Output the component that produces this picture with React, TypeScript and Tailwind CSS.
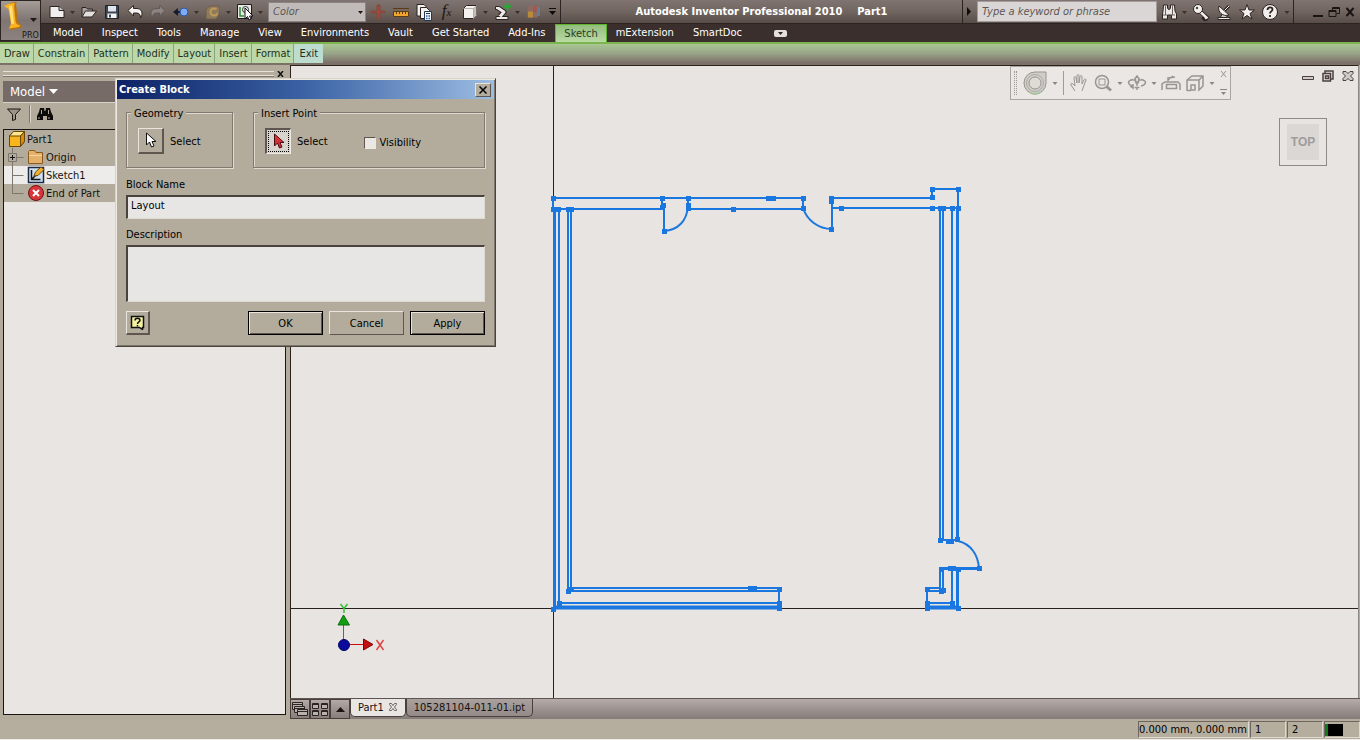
import type { ReactNode } from 'react';

const outline = { stroke: '#2b2422', strokeWidth: 1 };

function Caret({ className = 'w-[9px]', fill = '#3a302d' }: { className?: string; fill?: string }) {
  return (
    <svg className={`${className} h-[10px] shrink-0`} viewBox="0 0 9 10" aria-hidden="true">
      <path d="M2 4h5L4.500 7z" fill={fill} />
    </svg>
  );
}

function Tool({ label, children }: { label: string; children: ReactNode }) {
  return (
    <button aria-label={label} className="flex h-full w-[23px] shrink-0 items-center justify-center">
      <svg className="h-[18px] w-[18px]" viewBox="0 0 18 18" fill="none" aria-hidden="true">
        {children}
      </svg>
    </button>
  );
}

function AppButton() {
  return (
    <button
      aria-label="Inventor menu"
      className="relative h-[41px] w-[41px] shrink-0 border border-[#2b2422] bg-linear-to-b from-[#a59c98] via-[#7f7572] to-[#8c8380]"
    >
      <svg className="h-full w-full" viewBox="0 0 39 39" aria-hidden="true">
        <path d="M4 5c3-2.500 8-4 12-4l-1 2 2 16c0 3 2 5 4 5l-1 3-11 2 1-3c1-1 1-2 0.500-4L8 7z" fill="#b9720f" />
        <path d="M3 5c3-2 7-3 11-3l-1 3 1.500 15c.5 3 2 4 4.500 4l-1 2-10 1.500 1-2.500c1-1 1-3 .5-5L7.500 8z" fill="#f9b321" />
        <path d="M8 5l3-.500 2 18-2.500.5z" fill="#ffe07a" />
        <path d="M29 17h7l-3.500 4z" fill="#1e1816" />
      </svg>
      <span className="absolute right-px bottom-0 text-[9px] leading-[10px] text-[#1b1615]">PRO</span>
    </button>
  );
}

function QuickAccess() {
  return (
    <div className="flex h-full shrink-0 items-center border-r border-[#2b2422] pl-1">
      <Tool label="New">
        <path d="M2 3.500h9l5 4V14.500H2z" fill="#f1eeee" {...outline} />
        <path d="M11 3.500v4h5" fill="#c9c4c3" {...outline} />
      </Tool>
      <Caret />
      <Tool label="Open">
        <path d="M2 14V4.500h4l1.500 1.500h5v3" fill="#a9a2a0" {...outline} />
        <path d="M2 14l3.500-6h11L12 14z" fill="#e3dfde" {...outline} />
      </Tool>
      <Tool label="Save">
        <path d="M2.500 2.500h13v13h-13z" fill="#3c4653" stroke="#1f2328" />
        <path d="M5 3h8v5.500H5z" fill="#dfe5ea" />
        <path d="M4.500 10.500h9V15h-9z" fill="#f4f4f4" />
        <path d="M6 11.500h2v3H6z" fill="#3c4653" />
      </Tool>
      <Tool label="Undo">
        <path d="M2 7.500L7.500 2.500v3H11c3.500 0 5 2.500 5 5 0 2-.5 3-1.500 4.500 0-3-1-5-4-5h-3v3z" fill="#f5f2f1" {...outline} />
      </Tool>
      <Tool label="Redo">
        <path d="M16 7.500L10.500 2.500v3H7c-3.500 0-5 2.500-5 5 0 2 .5 3 1.500 4.500 0-3 1-5 4-5h3v3z" fill="#8d8380" stroke="#615855" />
      </Tool>
      <Tool label="Return">
        <path d="M1 9l5-4v3h4v2H6v3z" fill="#141c33" />
        <circle cx="12" cy="9" r="4" fill="#7fabf0" stroke="#2c54a8" />
      </Tool>
      <Caret />
      <Tool label="Update">
        <path d="M2 6l4-3h9v9l-3 4H2z" fill="#8e7b5f" stroke="#6c5c4a" />
        <circle cx="10" cy="9" r="3.500" stroke="#c09a55" strokeWidth="2" />
        <path d="M9 8l6-3v6z" fill="#8e7b5f" />
      </Tool>
      <Caret />
      <Tool label="Select">
        <path d="M1.500 1.500h14v14h-14z" fill="#e7eae4" stroke="#1f1b1a" />
        <path d="M4 4v9h4" stroke="#2d8a3d" strokeWidth="1.500" />
        <circle cx="9.500" cy="6.500" r="3" stroke="#333" />
        <path d="M9 5v11l2.500-2.500 1.500 3.500 2-1-1.500-3h3.500z" fill="#fff" stroke="#111" />
      </Tool>
      <Caret />
      <select
        aria-label="Color"
        className="ml-[3px] h-[20px] w-[98px] shrink-0 appearance-none border border-[#8b8482] bg-[#c0bbb9] pl-1 text-[11px] leading-[17px] text-[#5d5653] italic"
      >
        <option>Color</option>
      </select>
      <div className="-ml-[11px] flex w-[11px] justify-center">
        <Caret fill="#1e1816" />
      </div>
      <Tool label="Adjust">
        <path d="M8 2h3v6h5v2h-5v6H8v-6H2V8h6z" fill="#a5473c" stroke="#7c4a41" />
      </Tool>
      <Tool label="Measure">
        <path d="M1 5.500h16" stroke="#5c3a12" />
        <path d="M1.500 8.500h15v5h-15z" fill="#f0a52c" stroke="#5c3a12" />
        <path d="M4.500 9v2M7.500 9v2M10.500 9v2M13.500 9v2" stroke="#5c3a12" />
      </Tool>
      <Tool label="Parameters">
        <path d="M2 1.500h7l2.500 2.500v9H2z" fill="#f3f1f0" {...outline} />
        <path d="M5.500 4.500h6l3 3v8h-9z" fill="#f3f1f0" {...outline} />
        <path d="M9.500 8.500h7v9h-7z" fill="#f3f6fa" stroke="#25384d" />
        <path d="M11 10.500h4" stroke="#25384d" />
        <path d="M11 13h1M12.500 13h1M14 13h1M11 15.500h1M12.500 15.500h1M14 15.500h1" stroke="#2c5fa8" strokeWidth="1.500" />
      </Tool>
      <button aria-label="Functions" className="h-full w-[23px] shrink-0 font-['Liberation_Serif',serif] text-[17px] leading-5 text-[#1b1615] italic">
        f<span className="text-[11px]">x</span>
      </button>
      <Tool label="Part">
        <path d="M2.500 5.500l3-3h10v10l-3 3h-10z" fill="#f4f1ef" {...outline} />
        <path d="M12.500 5.500v10l3-3v-10z" fill="#c5bfbc" />
        <path d="M2.500 5.500h10l3-3M12.500 5.500v10" stroke="#b5aeab" />
      </Tool>
      <Caret />
      <Tool label="Add component">
        <path d="M5 5l6 4-4 4" stroke="#2b2422" strokeWidth="5" strokeLinejoin="round" />
        <path d="M2.500 3.500h4v3h-4zM3 13.500h12v3H3z" fill="#eeeae8" {...outline} />
        <path d="M5 5l6 4-4 4.500" stroke="#eeeae8" strokeWidth="3" strokeLinejoin="round" />
        <path d="M14.500 0v7M11 3.500h7" stroke="#1fae2e" strokeWidth="2" />
      </Tool>
      <Caret />
      <Tool label="Appearance">
        <path d="M2.500 2.500h10v12h-10z" fill="#8a6a63" />
        <path d="M3 8.500h5v6H3z" fill="#b98a3a" />
        <path d="M8 3h4v6H8z" fill="#a5564e" />
        <path d="M12 4h3v9h-3z" fill="#5d7f8f" />
      </Tool>
      <button aria-label="Customize" className="flex h-full w-[15px] items-center justify-center">
        <svg className="h-[7px] w-[9px]" viewBox="0 0 9 7" aria-hidden="true">
          <path d="M1 0h7v1H1zM1 3h7L4.500 7z" fill="#0f0c0b" />
        </svg>
      </button>
    </div>
  );
}

function InfoCenter() {
  return (
    <div className="flex h-full shrink-0 items-center border-x border-[#2b2422]">
      <svg className="h-[9px] w-[14px]" viewBox="0 0 14 9" aria-hidden="true">
        <path d="M4 0v9l4-4.500z" fill="#0f0c0b" />
      </svg>
      <input
        aria-label="Search"
        placeholder="Type a keyword or phrase"
        className="h-[21px] w-[180px] border border-[#a39c9a] bg-[#dad6d5] px-1 text-[11px] text-[#47403e] italic placeholder:text-[#5d5653]"
      />
      <Tool label="Find">
        <path d="M3.500 2h4v3l1 1.500h1l1-1.500V2h4l.5 6 1.500 3v5h-5v-4h-4v4h-5v-5L3 8z" fill="#ece8e6" {...outline} />
        <path d="M5.500 3v9M12.500 3v9M3 12h4M11 12h4" stroke="#6b6360" />
      </Tool>
      <Caret />
      <Tool label="Subscription">
        <path d="M8 8.500l7 6-1.500 2-3-2.500M12 14l1-1" stroke="#2b2422" strokeWidth="4" />
        <path d="M8 8.500l6.500 6-1.500 1" stroke="#f1eeec" strokeWidth="2.500" />
        <circle cx="6" cy="6" r="4.500" fill="#f1eeec" {...outline} />
        <circle cx="5" cy="5" r="1.200" fill="#4a403d" />
      </Tool>
      <Tool label="Communication">
        <path d="M8 10l-3 5h8l-3-4" fill="#cfc9c6" stroke="#2b2422" />
        <path d="M4 3c-2 6 4 11 10 9z" fill="#f1eeec" {...outline} />
        <path d="M9.500 7.500L14 3" stroke="#2b2422" strokeWidth="3" />
        <path d="M9.500 7.500L14 3" stroke="#f1eeec" />
        <path d="M3 14.500h12v2H3z" fill="#f1eeec" {...outline} />
      </Tool>
      <Tool label="Favorites">
        <path d="M9 1.500l2 5.500h5.500l-4.500 3.500 2 5.500-5-3.500L4 16l2-5.500L1.500 7H7z" fill="#f4f1ef" {...outline} />
      </Tool>
      <Tool label="Help">
        <circle cx="9" cy="9" r="7.500" fill="#f1eeec" {...outline} />
        <path d="M6.500 7c0-3.500 5-3.500 5-.500 0 2-2.500 1.800-2.500 4M9 12v2" stroke="#2b2422" strokeWidth="1.800" />
      </Tool>
      <Caret className="w-[12px]" />
    </div>
  );
}

function WindowButtons() {
  return (
    <div className="flex h-full w-[66px] shrink-0 items-center justify-end gap-1 pr-1">
      <button aria-label="Minimize">
        <svg className="h-3 w-3" viewBox="0 0 12 12"><path d="M1 9h10v2H1z" fill="#1a1413" /></svg>
      </button>
      <button aria-label="Restore">
        <svg className="h-3 w-3" viewBox="0 0 12 12" fill="none" stroke="#1a1413">
          <path d="M1 4.500h7v6H1zM4.500 4V1.500h7v6H8.500M1 5.500h7M4.500 2.500h7" />
        </svg>
      </button>
      <button aria-label="Close">
        <svg className="h-3 w-3" viewBox="0 0 12 12"><path d="M2.500 2l7 8M9.500 2l-7 8" stroke="#1a1413" strokeWidth="2" /></svg>
      </button>
    </div>
  );
}

const menus = ['Model', 'Inspect', 'Tools', 'Manage', 'View', 'Environments', 'Vault', 'Get Started', 'Add-Ins', 'Sketch', 'mExtension', 'SmartDoc'];
const panels = ['Draw', 'Constrain', 'Pattern', 'Modify', 'Layout', 'Insert', 'Format', 'Exit'];

function Header() {
  return (
    <header className="shrink-0">
      <div className="flex h-[42px] bg-[#3a2f2c]">
        <AppButton />
        <div className="flex min-w-0 flex-1 flex-col">
          <div className="flex h-6 items-center border-b border-[#2b2422] bg-linear-to-b from-[#7f7471] via-[#70655f] to-[#584d49]">
            <QuickAccess />
            <h1 className="flex flex-1 justify-center gap-[15px] text-[11px] font-bold whitespace-pre text-white">
              <span>Autodesk Inventor Professional 2010</span>
              <span>Part1</span>
            </h1>
            <InfoCenter />
            <WindowButtons />
          </div>
          <nav className="flex h-[18px] items-stretch pl-[3px] text-white">
            {menus.map((m) => (
              <button
                key={m}
                className={
                  m === 'Sketch'
                    ? 'border border-b-0 border-[#5fb42c] bg-linear-to-b from-[#93bd7e] to-[#b9dba4] px-2 leading-[14px] text-[#2d3a26]'
                    : 'pr-[10px] pl-[9px] leading-4'
                }
              >
                {m}
              </button>
            ))}
            <button aria-label="Ribbon options" className="ml-[22px] flex items-center">
              <svg className="h-[7px] w-[13px]" viewBox="0 0 13 7" aria-hidden="true">
                <rect width="13" height="7" rx="2" fill="#e4dfdd" />
                <path d="M4 2h5L6.500 5z" fill="#2b2422" />
              </svg>
            </button>
          </nav>
        </div>
      </div>
      <div className="flex h-[23px] items-stretch border-t-2 border-b-2 border-t-[#7db450] border-b-[#7b7166] bg-linear-to-b from-[#a9c793] via-[#98a588] to-[#7b6e69]">
        {panels.map((p) => (
          <button
            key={p}
            className={
              p === 'Exit'
                ? 'bg-[#bcdcd0] px-[5px] leading-[18px] text-[#22301f]'
                : 'border-r border-[#8aa37a] bg-[#bcd8a8] pr-[3px] pl-1 leading-[18px] text-[#22301f]'
            }
          >
            {p}
          </button>
        ))}
      </div>
    </header>
  );
}

function TreeItem({ label, last, selected, expander, icon }: { label: string; last?: boolean; selected?: boolean; expander?: boolean; icon: ReactNode }) {
  return (
    <li className={selected ? 'flex h-[18px] items-center bg-[#eeeceb]' : 'flex h-[18px] items-center bg-[#b3ac9d]'}>
      <svg className="h-[18px] w-[23px] shrink-0" viewBox="0 0 23 18" fill="none" aria-hidden="true">
        <path d={last ? 'M8.500 0v9.500h11' : 'M8.500 0v18M8.500 9.500h11'} stroke="#7d766c" />
        {expander && <path d="M4.500 5.500h8v8h-8z" fill="#b3ac9d" stroke="#7d766c" />}
        {expander && <path d="M6 9.500h5M8.500 7v5" stroke="#111" />}
      </svg>
      <svg className="h-[18px] w-[18px] shrink-0" viewBox="0 0 18 18" fill="none" aria-hidden="true">{icon}</svg>
      <span className="pt-px pl-px leading-[17px]">{label}</span>
    </li>
  );
}

function ModelBrowser() {
  return (
    <aside className="flex w-[291px] shrink-0 flex-col pt-[5px] pr-[5px] pb-1 pl-[3px]">
      <div className="flex h-[11px] items-start">
        <div className="mt-px h-[5px] flex-1 border-y border-[#e6e2da] shadow-[0_1px_0_#7d766c]" />
        <button aria-label="Close browser" className="flex w-3 justify-center pt-px">
          <svg className="h-[6px] w-[7px]" viewBox="0 0 7 6"><path d="M1 0l5 6M6 0L1 6" stroke="#111" strokeWidth="1.500" /></svg>
        </button>
      </div>
      <button className="flex h-[21px] items-center gap-1 bg-[#776b68] pl-[7px] text-[13px] text-white">
        Model
        <svg className="h-[5px] w-[9px]" viewBox="0 0 9 5"><path d="M0 0h9L4.500 5z" fill="#fff" /></svg>
      </button>
      <div className="flex h-[27px] items-center border-t border-[#d9d4ca] pb-1">
        <button aria-label="Filter" className="flex w-[26px] pl-[4px]">
          <svg className="h-[13px] w-[14px]" viewBox="0 0 14 13"><path d="M.5 1h13L8.500 6.500v5l-3 1v-6z" fill="#9c9588" stroke="#1a1413" /></svg>
        </button>
        <span className="h-[18px] w-[2px] border-l border-[#7d766c] bg-[#dcd7cc]" />
        <button aria-label="Find" className="flex w-[28px] justify-center">
          <svg className="h-[14px] w-[16px]" viewBox="0 0 16 14">
            <path d="M3 1h4l.5 3h1L9 1h4l1 4 2 4v4h-6V9H6v4H0V9l2-4z" fill="#0d0b0a" />
            <path d="M4.500 3v4M11.500 3v4M2 10v2M12 10v2" stroke="#b3ac9d" />
          </svg>
        </button>
      </div>
      <div className="flex-1 border border-[#1a1413] bg-[#e8e5e3]">
        <ul className="text-[#151110]">
          <li className="flex h-[18px] items-center bg-[#b3ac9d]">
            <svg className="ml-1 h-[18px] w-[18px]" viewBox="0 0 18 18" aria-hidden="true">
              <path d="M1.500 6l4-4.500h11v10l-4 5h-11z" fill="#f7b51e" stroke="#6b4503" />
              <path d="M1.500 6l4-4.500h11l-4 4.500z" fill="#ffe88c" stroke="#6b4503" />
              <path d="M12.500 6v10.500l4-5v-10z" fill="#d98a0c" stroke="#6b4503" />
            </svg>
            <span className="pt-px pl-px leading-[17px]">Part1</span>
          </li>
          <TreeItem
            label="Origin"
            expander
            icon={
              <>
                <path d="M1.500 15.500v-12l1-1h5l1.500 2h6.500v11z" fill="#e4b06a" stroke="#8a5a1e" />
                <path d="M2 7.500h13" stroke="#f7d79d" />
              </>
            }
          />
          <TreeItem
            label="Sketch1"
            selected
            icon={
              <>
                <path d="M1.500 1.500h15v15h-15z" fill="#cfe0f3" stroke="#1c2a45" strokeWidth="1.500" />
                <path d="M4.500 4v9.500h9M5 13l4-4" stroke="#111" strokeWidth="1.500" />
                <path d="M7 10l1.500-4 5.500-5 3 2.500-6 6z" fill="#efb32b" stroke="#6b4503" />
              </>
            }
          />
          <TreeItem
            label="End of Part"
            last
            icon={
              <>
                <circle cx="9" cy="9" r="7.500" fill="#d8343a" stroke="#6d1114" />
                <path d="M6 6l6 6M12 6l-6 6" stroke="#fff" strokeWidth="2" />
              </>
            }
          />
        </ul>
      </div>
    </aside>
  );
}

const nodes: [number, number][] = [
  [553, 198], [662, 198], [688, 198], [768, 198], [773, 198], [803, 198], [831, 198], [932, 197], [932, 189], [958, 189],
  [553, 209], [558, 209], [568, 209], [571, 209], [662, 207], [663, 205], [688, 208], [688, 205], [733, 209], [803, 208], [831, 201], [841, 208], [932, 208],
  [940, 208], [943, 208], [952, 208], [958, 208], [664, 231], [831, 229],
  [940, 540], [948, 541], [951, 541], [957, 539], [979, 568], [941, 569], [950, 568], [953, 568], [958, 569],
  [927, 589], [941, 591], [943, 590], [927, 603], [952, 603], [927, 608], [958, 608],
  [571, 589], [568, 591], [750, 588], [754, 588], [779, 589], [779, 603], [779, 608], [559, 603], [553, 609],
];

function Drawing() {
  return (
    <svg className="block h-full w-full" fill="none" role="img" aria-label="Sketch layout">
      <g transform="translate(-291 -66)">
        <path d="M553.500 65v800M291 608.500h3000" stroke="#2a201e" strokeWidth="1" />
        <g stroke="#1a77df" strokeWidth="2">
          <path d="M553 198h250M553 209h109M688 209h115M831 198h101v-9h26v19M841 208h117M831 208h10" />
          <path d="M553 198v11M662 198v11M688 198v11M803 198v11" />
          <path d="M664 206v25c14-1 23-10 24-25M803 208c4 12 15 21 29 21v-31" />
          <path d="M559 209v394h220M568 209v382h211M571 209v379h208v20" />
          <path d="M940 208v332h18M943 208v332M952 208v332" />
          <path d="M958 541c13 3 20 14 21 27h-38" />
          <path d="M940 569v19h-13v20M943 569v22h-16M952 569v34h-25" />
        </g>
        <g stroke="#1a77df" strokeWidth="3">
          <path d="M554.500 209v399M957.500 208v332M957.500 569v39M941 568.500h38" />
        </g>
        <path d="M554 607.500h225M927 607.500h31" stroke="#1a77df" strokeWidth="4" />
        {nodes.map(([x, y]) => (
          <rect key={`${x}-${y}`} x={x - 2} y={y - 2} width="5" height="5" fill="#1a77df" />
        ))}
        <path d="M343.500 645v-24" stroke="#12a012" />
        <path d="M338 625l5.500-10 6 10z" fill="#12a012" stroke="#0b6e0b" />
        <path d="M344 644.500h22" stroke="#c40d0d" />
        <path d="M363.500 639v11l9.500-5.500z" fill="#c40d0d" stroke="#7d0707" />
        <circle cx="344" cy="645" r="5.500" fill="#0a0a9c" stroke="#050560" />
        <path d="M340.500 604l3.500 4.500 3.500-4.500M344 608v5" stroke="#35c235" strokeWidth="1.500" />
        <path d="M376.500 640l7 10M383.500 640l-7 10" stroke="#e04545" strokeWidth="1.500" />
      </g>
    </svg>
  );
}

function NavTool({ label, children, drop }: { label: string; children: ReactNode; drop?: boolean }) {
  return (
    <button aria-label={label} className="flex shrink-0 items-center">
      <svg className="h-5 w-6" viewBox="0 0 22 20" fill="none" stroke="#9b9592" aria-hidden="true">{children}</svg>
      {drop && <Caret className="w-[10px]" fill="#8c8683" />}
    </button>
  );
}

function NavigationBar() {
  return (
    <div className="absolute top-0 right-[127px] flex h-[34px] items-center border border-[#aaa5a2] bg-[#eae7e5] pl-[3px]">
      <span className="mr-1 h-6 w-[3px] border-x border-dotted border-[#9b9592]" />
      <button aria-label="Steering wheel" className="flex items-center">
        <svg className="h-6 w-7" viewBox="0 0 28 24" fill="none" aria-hidden="true">
          <path d="M14 1h11v11a11 11 0 1 1-11-11z" fill="#d0cec8" stroke="#999490" />
          <circle cx="14" cy="12" r="8.500" stroke="#aeaaa5" />
          <circle cx="14" cy="12" r="6" fill="#deddd5" stroke="#999490" />
          <path d="M8 21c4 2.500 8 2.500 12 0" stroke="#a9c4a2" strokeWidth="2" />
        </svg>
        <Caret className="w-3" fill="#8c8683" />
      </button>
      <span className="mr-[3px] ml-[2px] h-6 w-px bg-[#a19b98]" />
      <NavTool label="Pan">
        <path d="M7 18L3 12c-1-2 1-2 2-1l2 2-1-8c0-2 2-2 2 0l1 5V3c0-2 2-2 2 0v7l1-6c0-2 2-2 2 0v7l2-4c1-2 2-1 2 0l-3 8-1 3" />
      </NavTool>
      <NavTool label="Zoom" drop>
        <circle cx="10" cy="9" r="6.500" strokeWidth="1.500" />
        <path d="M7 6h6v6H7z" />
        <path d="M14.500 13.500l4.500 4" strokeWidth="3" />
      </NavTool>
      <NavTool label="Orbit" drop>
        <path d="M7 6.500c-6 1-6 5 0 6.500M15 6.500c6 1 6 5 0 6.500M7 11v4l-3-2M8 7l3-4 3 4h-1.500v2H9.500V7zM9.500 10h3M11 10v3M8.500 14.500h5M11 14v3" strokeWidth="1.500" />
      </NavTool>
      <NavTool label="Look at">
        <path d="M2 17v-6l3-2h13l2 2v6M6.500 11.500h10v4h-10zM8 8V5l7-1M8 7l5-4" strokeWidth="1.500" />
      </NavTool>
      <NavTool label="Views" drop>
        <path d="M3 18V7l5-4h11v10l-4 4V7l4-4M3 7h12M3 17.500h4M7 12h4v5H7z" strokeWidth="1.500" />
      </NavTool>
      <div className="flex h-full w-[13px] flex-col items-center justify-between py-1">
        <svg className="h-[6px] w-[7px]" viewBox="0 0 7 6"><path d="M1 0l5 6M6 0L1 6" stroke="#9b9592" /></svg>
        <svg className="h-[6px] w-[7px]" viewBox="0 0 7 6"><path d="M0 0h7v1H0zM1 3h5L3.500 6z" fill="#8c8683" /></svg>
      </div>
    </div>
  );
}

function ChildWindowButtons() {
  return (
    <div className="absolute top-1 right-1 flex items-center gap-2">
      <button aria-label="Minimize document">
        <svg className="h-3 w-3" viewBox="0 0 12 12"><path d="M.5 6.500h11v3H.5z" fill="#cfcac8" stroke="#4a3f3c" /></svg>
      </button>
      <button aria-label="Restore document">
        <svg className="h-3 w-3" viewBox="0 0 12 12" fill="none" stroke="#4a3f3c" strokeWidth="1.500"><path d="M3 3V1h8v8H9M1 3.500h7.500v7.500H1zM3.500 6h3v2.500h-3z" /></svg>
      </button>
      <button aria-label="Close document">
        <svg className="h-3 w-3" viewBox="0 0 12 12"><path d="M1 1.500h3l2 2 2-2h3v2L8.500 6 11 8.500v2H8l-2-2-2 2H1v-2L3.500 6 1 3.500z" fill="#cfcac8" stroke="#4a3f3c" /></svg>
      </button>
    </div>
  );
}

function DocumentTabs() {
  const box = 'flex h-[20px] w-5 items-center justify-center border border-[#4a3f3c]';
  return (
    <div className="flex h-[21px] shrink-0 items-start border-t border-[#5e5552] bg-linear-to-b from-[#b5acaa] to-[#857b78]">
      <button aria-label="Cascade" className={box}>
        <svg className="h-4 w-4" viewBox="0 0 16 16" fill="#b8b1ae" stroke="#2b2422">
          <path d="M.5 1.500h10v7H.5zM.5 3.500h10" />
          <path d="M2.500 5.500h10v6h-10zM2.500 7.500h10" />
          <path d="M5.500 8.500h10v6h-10zM5.500 10.500h10" />
        </svg>
      </button>
      <button aria-label="Arrange" className={box}>
        <svg className="h-4 w-4" viewBox="0 0 16 16" fill="#b8b1ae" stroke="#2b2422"><path d="M.5 2.500h6v5h-6zM9.500 2.500h6v5h-6zM.5 9.500h6v5h-6zM9.500 9.500h6v5h-6zM.5 3.500h6M9.500 3.500h6M.5 10.500h6M9.500 10.500h6" /></svg>
      </button>
      <button aria-label="List documents" className={box}>
        <svg className="h-[5px] w-[9px]" viewBox="0 0 9 5"><path d="M0 5h9L4.500 0z" fill="#1a1413" /></svg>
      </button>
      <button className="flex h-[18px] items-center gap-[5px] rounded-b-[5px] border border-t-0 border-[#4a3f3c] bg-[#e8e5e3] pr-2 pl-[7px] text-[#151110]">
        Part1
        <svg className="mb-px h-2 w-2" viewBox="0 0 8 8" fill="none" stroke="#6b6360"><path d="M.5.500h2L4 2.500 5.500.500h2v1L5.500 4l2 2.500v1h-2L4 5.500 2.500 7.500h-2v-1L2.500 4l-2-2.500z" /></svg>
      </button>
      <button className="flex h-[18px] items-center rounded-b-[5px] border border-t-0 border-[#4a3f3c] bg-linear-to-b from-[#aaa19f] to-[#948b88] px-[7px] text-[#151110]">
        105281104-011-01.ipt
      </button>
    </div>
  );
}

const raised = 'border border-t-[#e9e5dc] border-l-[#e9e5dc] border-r-[#5f574f] border-b-[#5f574f] bg-[#b3ac9d]';
const defaultButton = 'h-[24px] w-[75px] border border-black bg-[#b3ac9d] pt-px shadow-[inset_1px_1px_0_#e9e5dc,inset_-1px_-1px_0_#5f574f]';
const groupBox = 'relative border border-[#827a70] shadow-[1px_1px_0_#dfdad0,inset_1px_1px_0_#dfdad0]';
const sunken = 'border border-t-2 border-l-2 border-t-[#4a423c] border-r-[#dfdad0] border-b-[#dfdad0] border-l-[#4a423c] bg-[#e8e6e4]';
const pointer = 'M2.500 1v12l3-3 2 5 2.500-1L8 9.500h4z';

function CreateBlockDialog() {
  return (
    <section
      role="dialog"
      aria-labelledby="dialog-title"
      className="absolute top-[78px] left-[115px] w-[381px] border border-t-[#d8d3c8] border-l-[#d8d3c8] border-r-[#4a423c] border-b-[#4a423c] bg-[#b3ac9d] p-px text-black shadow-[inset_1px_1px_0_#eeeae2,inset_-1px_-1px_0_#7d766c]"
    >
      <div className="flex h-[19px] items-center bg-linear-to-r from-[#0e2266] via-[#3c63a5] to-[#9dbde2] pr-[3px] pl-[2px]">
        <h2 id="dialog-title" className="flex-1 text-[11px] font-bold text-white">Create Block</h2>
        <button aria-label="Close" className={`${raised} flex h-[14px] w-4 items-center justify-center`}>
          <svg className="h-2 w-2" viewBox="0 0 8 8"><path d="M.5.500l7 7M7.500.500l-7 7" stroke="#000" strokeWidth="1.500" /></svg>
        </button>
      </div>
      <div className="px-[9px] pt-[13px] pb-[10px]">
        <div className="flex gap-[20px]">
          <div role="group" aria-label="Geometry" className={`${groupBox} h-[56px] w-[107px]`}>
            <span className="absolute -top-[5px] left-[4px] bg-[#b3ac9d] px-[3px] leading-3">Geometry</span>
            <div className="flex items-center gap-[6px] pt-[15px] pl-[11px]">
              <button id="geo" aria-label="Select geometry" className={`${raised} flex h-[26px] w-[26px] items-center justify-center border-r-2 border-b-2`}>
                <svg className="h-[17px] w-[14px]" viewBox="0 0 14 17"><path d={pointer} fill="#fff" stroke="#111" /></svg>
              </button>
              <label htmlFor="geo" className="pt-[2px]">Select</label>
            </div>
          </div>
          <div role="group" aria-label="Insert Point" className={`${groupBox} h-[56px] flex-1`}>
            <span className="absolute -top-[5px] left-[4px] bg-[#b3ac9d] px-[3px] leading-3">Insert Point</span>
            <div className="flex items-center gap-[6px] pt-[15px] pl-[11px]">
              <button id="ins" aria-label="Select insert point" className="flex h-[26px] w-[26px] items-center justify-center border border-t-2 border-l-2 border-t-[#5f574f] border-r-[#eeeae2] border-b-[#eeeae2] border-l-[#5f574f] bg-[#d8d3cd]">
                <span className="flex h-[21px] w-[21px] items-center justify-center border border-dotted border-black">
                  <svg className="h-[17px] w-[14px]" viewBox="0 0 14 17"><path d={pointer} fill="#d83038" stroke="#4a0d10" /></svg>
                </span>
              </button>
              <label htmlFor="ins" className="pt-[2px]">Select</label>
              <label className="ml-[30px] flex items-center gap-[4px] pt-[3px]">
                <input type="checkbox" className="h-3 w-3 appearance-none border border-t-[#5f574f] border-r-[#eeeae2] border-b-[#eeeae2] border-l-[#5f574f] bg-[#ebe7e2] checked:bg-[#5f574f]" />
                Visibility
              </label>
            </div>
          </div>
        </div>
        <label htmlFor="name" className="mt-[10px] block leading-[14px]">Block Name</label>
        <input id="name" defaultValue="Layout" className={`${sunken} mt-[3px] block h-[24px] w-full px-[3px] pb-1`} />
        <label htmlFor="description" className="mt-[9px] block leading-[14px]">Description</label>
        <textarea id="description" className={`${sunken} mt-[3px] block h-[57px] w-full resize-none px-[3px]`} />
        <div className="mt-[9px] flex items-center gap-[6px]">
          <button aria-label="Help" className={`${raised} mr-auto flex h-[24px] w-6 items-center justify-center border-r-2 border-b-2`}>
            <svg className="h-[15px] w-[15px]" viewBox="0 0 15 15" fill="none">
              <path d="M1.500 1.500h12v11h-1v2l-3-2h-8z" fill="#f6f3a0" stroke="#111" strokeWidth="1.500" />
              <path d="M5 5.500c0-3 5-3 5 0 0 1.500-2.500 1.500-2.500 3.500M7.500 10v1.500" stroke="#111" strokeWidth="1.500" />
            </svg>
          </button>
          <button className={defaultButton}>OK</button>
          <button className={`${raised} h-[24px] w-[75px] pt-px`}>Cancel</button>
          <button className={defaultButton}>Apply</button>
        </div>
      </div>
    </section>
  );
}

function StatusBar() {
  const cell = 'flex h-[17px] items-center border border-t-[#6f675d] border-l-[#6f675d] border-r-[#dfdad0] border-b-[#dfdad0] pt-px text-black';
  return (
    <footer className="flex h-[21px] shrink-0 items-center justify-end gap-px border-b border-[#efece6] bg-[#b5ae9f]">
      <span className={`${cell} w-[111px] whitespace-nowrap`}>0.000 mm, 0.000 mm</span>
      <span className={`${cell} w-[36px] px-1`}>1</span>
      <span className={`${cell} w-[36px] px-1`}>2</span>
      <span className={`${cell} w-[36px]`}>
        <span className="h-3 w-[18px] border-l-[3px] border-[#0f7a1b] bg-black" />
      </span>
    </footer>
  );
}

export default function App() {
  return (
    <div className="relative flex h-screen flex-col overflow-hidden bg-[#b3ac9d] font-['DejaVu_Sans_Condensed','DejaVu_Sans',sans-serif] text-[11px] leading-[14px]">
      <Header />
      <div className="flex min-h-0 flex-1">
        <ModelBrowser />
        <main className="-ml-px flex min-w-0 flex-1 flex-col">
          <div className="relative mr-px min-h-0 flex-1 border-t border-r border-l border-[#2a201e] border-r-[#8f8986] bg-[#e7e4e2]">
            <Drawing />
            <NavigationBar />
            <ChildWindowButtons />
            <button aria-label="View cube" className="absolute top-[52px] right-[31px] flex h-12 w-12 items-center justify-center border border-[#8f8986]">
              <span className="flex h-9 w-8 items-center justify-center bg-[#dad7d5] font-['Liberation_Sans',sans-serif] text-[12px] font-bold text-[#a19c9a]">TOP</span>
            </button>
          </div>
          <DocumentTabs />
        </main>
      </div>
      <StatusBar />
      <CreateBlockDialog />
    </div>
  );
}
